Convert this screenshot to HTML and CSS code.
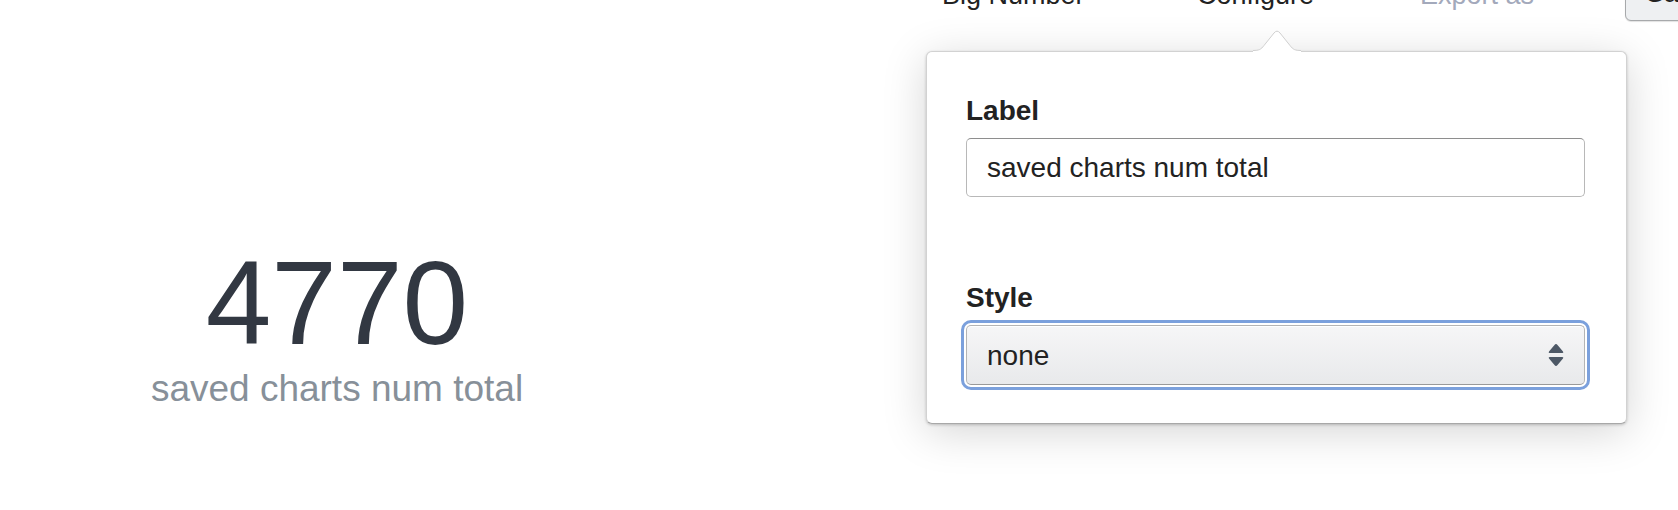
FILE: index.html
```html
<!DOCTYPE html>
<html lang="en">
<head>
<meta charset="utf-8">
<title>Big Number</title>
<link rel="stylesheet" href="styles.css">
</head>
<body>
<div class="app">
  <div class="topbar">
    <div class="tab tab-1">Big Number</div>
    <div class="tab tab-2">Configure</div>
    <div class="tab tab-3 muted">Export as</div>
    <button class="btn">Save</button>
  </div>
  <div class="main">
    <div class="chart">
      <div class="big-number">4770</div>
      <div class="big-label">saved charts num total</div>
    </div>
  </div>

  <div class="popover">
    <svg class="popover-arrow" width="48" height="24" viewBox="0 0 48 24">
      <path class="arrow-fill" d="M0,21.5 C6,21.5 8,20.5 11,16.5 L21,4 Q24,0.3 27,4 L37,16.5 C40,20.5 42,21.5 48,21.5 L48,24 L0,24 Z"/>
      <path class="arrow-stroke" d="M0,21.5 C6,21.5 8,20.5 11,16.5 L21,4 Q24,0.3 27,4 L37,16.5 C40,20.5 42,21.5 48,21.5"/>
    </svg>
    <div class="field">
      <label class="field-label" for="label-input">Label</label>
      <input id="label-input" class="text-input" type="text" value="saved charts num total">
    </div>
    <div class="field field-style">
      <label class="field-label" for="style-select">Style</label>
      <div class="select-wrap">
        <select id="style-select" class="select">
          <option>none</option>
        </select>
        <svg class="select-icon" width="16" height="24" viewBox="0 0 16 24">
          <path d="M8,1 Q8.8,1 9.5,2 L15,8.5 Q16,10 14.3,10 L1.7,10 Q0,10 1,8.5 L6.5,2 Q7.2,1 8,1 Z"/>
          <path d="M8,23 Q8.8,23 9.5,22 L15,15.5 Q16,14 14.3,14 L1.7,14 Q0,14 1,15.5 L6.5,22 Q7.2,23 8,23 Z"/>
        </svg>
      </div>
    </div>
  </div>
</div>
</body>
</html>
```

FILE: styles.css
```css
html, body {
  margin: 0;
  padding: 0;
  background: #ffffff;
  overflow: hidden;
}

body {
  width: 1678px;
  height: 510px;
  font-family: "Liberation Sans", Arial, Helvetica, sans-serif;
  color: #222222;
}

.app {
  position: relative;
  display: flex;
  flex-direction: column;
  width: 1678px;
  height: 510px;
}

/* ---------- top bar ---------- */
.topbar {
  display: flex;
  align-items: flex-start;
  height: 42px;
  margin-top: -21px;
  padding-left: 942px;
  flex-shrink: 0;
}

.tab {
  flex-shrink: 0;
  font-size: 27px;
  line-height: 32px;
  color: #222222;
  white-space: nowrap;
}

.tab-1 { width: 255px; }
.tab-2 { width: 223px; }
.tab-3 { width: 205px; }

.tab.muted {
  color: #a3a9bb;
}

.btn {
  flex-shrink: 0;
  height: 42px;
  width: 120px;
  padding: 0 0 0 20px;
  margin: 0;
  text-align: left;
  font-family: inherit;
  font-size: 27px;
  line-height: 26px;
  color: #222222;
  background: #eef0f2;
  border: 1px solid #a7a9ab;
  border-radius: 6px;
  box-shadow: 0 1px 1px rgba(0, 0, 0, 0.12);
  display: flex;
  align-items: flex-start;
}

/* ---------- chart ---------- */
.main {
  display: flex;
}

.chart {
  width: 674px;
  padding-top: 223px;
  display: flex;
  flex-direction: column;
  align-items: center;
}

.big-number {
  font-size: 118px;
  line-height: 118px;
  color: #323842;
}

.big-label {
  margin-top: 5px;
  font-size: 37px;
  line-height: 44px;
  color: #879099;
}

/* ---------- popover ---------- */
.popover {
  position: absolute;
  left: 926px;
  top: 51px;
  width: 701px;
  height: 373px;
  box-sizing: border-box;
  padding: 42px 41px 0 39px;
  background: #ffffff;
  border: 1px solid #d2d2d2;
  border-bottom-color: #a8a8a8;
  border-radius: 6px;
  box-shadow: 0 1px 3px rgba(0, 0, 0, 0.2), 0 8px 44px rgba(0, 0, 0, 0.17);
  display: flex;
  flex-direction: column;
}

.popover-arrow {
  position: absolute;
  left: 326px;
  top: -23px;
  overflow: visible;
}

.arrow-fill {
  fill: #ffffff;
}

.arrow-stroke {
  fill: none;
  stroke: #d0d0d0;
  stroke-width: 1;
}

.field {
  display: flex;
  flex-direction: column;
  gap: 10px;
}

.field-style {
  margin-top: 84px;
}

.field-label {
  font-size: 28px;
  line-height: 34px;
  font-weight: bold;
  color: #222222;
}

.text-input {
  box-sizing: border-box;
  width: 619px;
  height: 59px;
  margin: 0;
  padding: 0 20px;
  font-family: inherit;
  font-size: 28px;
  color: #222222;
  background: #ffffff;
  border: 1px solid #b8b8b8;
  border-top-color: #8e8e8e;
  border-radius: 5px;
  outline: none;
}

.select-wrap {
  position: relative;
  width: 619px;
}

.select {
  -webkit-appearance: none;
  appearance: none;
  box-sizing: border-box;
  display: block;
  width: 619px;
  height: 60px;
  margin: 0;
  padding: 0 20px;
  font-family: inherit;
  font-size: 28px;
  color: #222222;
  background: linear-gradient(#f6f6f7, #e8e9eb);
  border: 1px solid #b4b4b4;
  border-bottom-color: #999999;
  border-radius: 5px;
  box-shadow: inset 0 1px 0 #ffffff;
  outline: 3px solid #7ba0dc;
  outline-offset: 2px;
}

.select-icon {
  position: absolute;
  right: 21px;
  top: 18px;
  fill: #4d5866;
}
```
